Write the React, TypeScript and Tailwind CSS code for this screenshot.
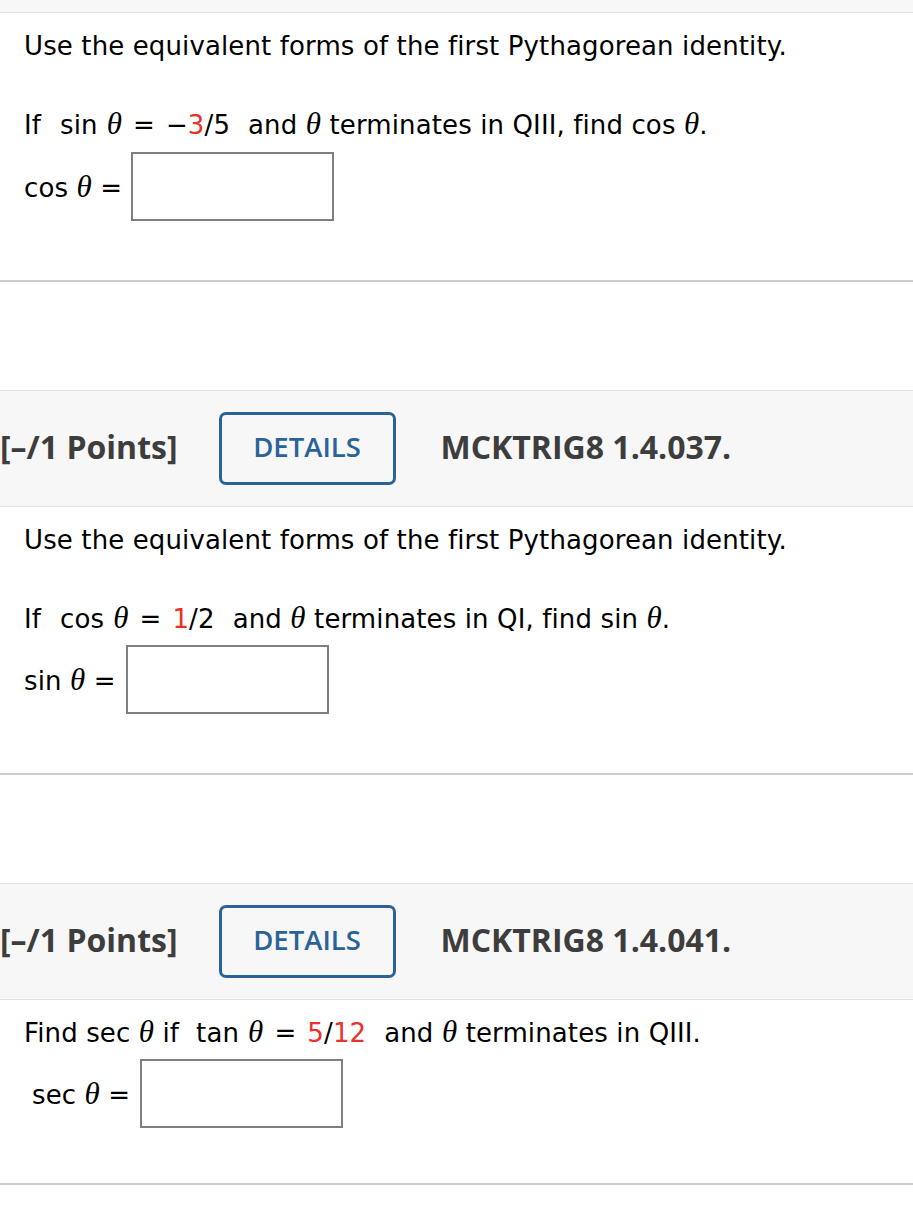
import React from "react";

const Th = ({ className = "" }: { className?: string }) => (
  <span className={"font-['Liberation_Serif',serif] italic text-[31px] leading-[0px] " + className}>θ</span>
);

const R = ({ children }: { children: React.ReactNode }) => (
  <span className="text-[#e8322a]">{children}</span>
);

const Box = ({ className = "" }: { className?: string }) => (
  <div className={"w-[203px] h-[69px] border-2 border-[#808080] bg-white shrink-0 " + className} />
);

const Header = ({ code }: { code: string }) => (
  <div className="h-[117px] bg-[#f7f7f7] border-y border-[#e0e0e0] flex items-center font-['Open_Sans',sans-serif] tracking-normal">
    <span className="text-[32px] font-bold text-[#3d3d3d] leading-none -mt-[3px]">[–/1 Points]</span>
    <div className="ml-[41px] w-[177px] h-[73px] border-[3px] border-[#2a6399] rounded-[7px] flex items-center justify-center text-[27.5px] font-semibold text-[#2a6399] leading-none -mt-[1px]">
      <span className="-mt-[3px]">DETAILS</span>
    </div>
    <span className="ml-[45px] text-[32px] font-bold text-[#3d3d3d] leading-none -mt-[3px]">{code}</span>
  </div>
);

const Sep = ({ className = "" }: { className?: string }) => (
  <div className={"h-[2px] bg-[#cccccc] " + className} />
);

export default function App() {
  return (
    <div className="w-[913px] h-[1205px] bg-white text-black font-['DejaVu_Sans',Verdana,sans-serif] text-[26px] tracking-[0.12px] overflow-hidden">
      <div className="h-[13px] bg-[#f7f7f7] border-b border-[#e0e0e0]" />

      {/* Section 1 */}
      <div className="pl-[24px]">
        <p className="mt-[18px] leading-[30px] h-[30px] whitespace-nowrap">Use the equivalent forms of the first Pythagorean identity.</p>
        <p className="mt-[49px] leading-[30px] h-[30px] whitespace-nowrap">
          If<span className="ml-[19px]">sin</span>
          <Th className="ml-[9px]" />
          <span className="ml-[11px]">=</span>
          <span className="ml-[11px]">−</span>
          <R>3</R>/5
          <span className="ml-[18px]">and</span> <Th /> terminates in QIII, find cos <Th />.
        </p>
        <div className="mt-[12px] flex items-center">
          <span className="leading-[30px] pt-[3px] whitespace-nowrap">
            cos <Th /> =
          </span>
          <Box className="ml-[9px]" />
        </div>
      </div>
      <Sep className="mt-[59px]" />

      <div className="mt-[108px]">
        <Header code="MCKTRIG8 1.4.037." />
      </div>

      {/* Section 2 */}
      <div className="pl-[24px]">
        <p className="mt-[18px] leading-[30px] h-[30px] whitespace-nowrap">Use the equivalent forms of the first Pythagorean identity.</p>
        <p className="mt-[49px] leading-[30px] h-[30px] whitespace-nowrap">
          If<span className="ml-[19px]">cos</span>
          <Th className="ml-[9px]" />
          <span className="ml-[11px]">=</span>
          <span className="ml-[11px]">
            <R>1</R>/2
          </span>
          <span className="ml-[18px]">and</span> <Th /> terminates in QI, find sin <Th />.
        </p>
        <div className="mt-[11px] flex items-center">
          <span className="leading-[30px] pt-[3px] whitespace-nowrap">
            sin <Th /> =
          </span>
          <Box className="ml-[10px]" />
        </div>
      </div>
      <Sep className="mt-[59px]" />

      <div className="mt-[108px]">
        <Header code="MCKTRIG8 1.4.041." />
      </div>

      {/* Section 3 */}
      <div className="pl-[24px]">
        <p className="mt-[18px] leading-[30px] h-[30px] whitespace-nowrap">
          Find sec <Th /> if<span className="ml-[17px]">tan</span>
          <Th className="ml-[9px]" />
          <span className="ml-[11px]">=</span>
          <span className="ml-[11px]">
            <R>5</R>/<R>12</R>
          </span>
          <span className="ml-[18px]">and</span> <Th /> terminates in QIII.
        </p>
        <div className="mt-[11px] flex items-center pl-[8px]">
          <span className="leading-[30px] pt-[3px] whitespace-nowrap">
            sec <Th /> =
          </span>
          <Box className="ml-[10px]" />
        </div>
      </div>
      <Sep className="mt-[55px]" />
    </div>
  );
}
